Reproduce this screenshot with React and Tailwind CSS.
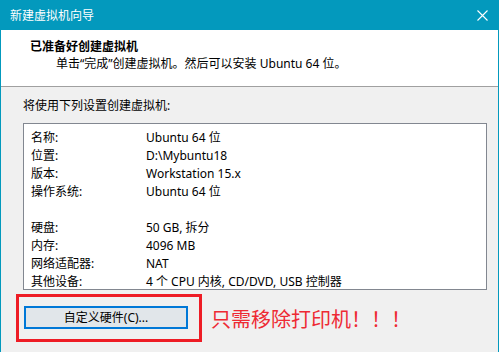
import React from "react";

const rows = [
  ["名称:", "Ubuntu 64 位"],
  ["位置:", "D:\\Mybuntu18"],
  ["版本:", "Workstation 15.x"],
  ["操作系统:", "Ubuntu 64 位"],
  ["", ""],
  ["硬盘:", "50 GB, 拆分"],
  ["内存:", "4096 MB"],
  ["网络适配器:", "NAT"],
  ["其他设备:", "4 个 CPU 内核, CD/DVD, USB 控制器"],
];

export default function App() {
  return (
    <div
      className="w-[499px] h-[352px] overflow-hidden bg-[#f0f0f0] border-l border-r border-[#0399bd] text-[12px] text-black flex flex-col"
      style={{ fontFamily: '"Noto Sans", "Noto Sans CJK SC", sans-serif' }}
    >
      <div className="h-[30px] shrink-0 bg-[#0399bd] flex items-center justify-between pl-[9px] pr-[9px] text-white">
        <span className="leading-[18px] mt-[1px]">新建虚拟机向导</span>
        <svg width="11" height="11" viewBox="0 0 11 11" className="mr-[1px]">
          <path d="M0.5 0.5 L10.5 10.5 M10.5 0.5 L0.5 10.5" stroke="white" strokeWidth="1.1" fill="none" />
        </svg>
      </div>
      <div className="h-[57px] shrink-0 bg-white border-b border-[#a0a0a0] pt-[8px]">
        <div className="pl-[29px] font-bold leading-[18px]">已准备好创建虚拟机</div>
        <div className="pl-[55px] leading-[18px] mt-[-1px]">单击“完成”创建虚拟机。然后可以安装 Ubuntu 64 位。</div>
      </div>
      <div className="px-[22px] pt-[10px] flex flex-col">
        <div className="leading-[18px]">将使用下列设置创建虚拟机:</div>
        <div className="mt-[8px] w-[464px] h-[167px] overflow-hidden bg-white border border-[#828790] pt-[5px] pl-[7px]">
          {rows.map(([k, v], i) => (
            <div key={i} className="flex h-[18px] items-center leading-[18px]">
              <span className="w-[115px] shrink-0">{k}</span>
              <span>{v}</span>
            </div>
          ))}
        </div>
        <div className="ml-[-7px] mt-[4px] flex items-center">
          <div className="w-[186px] h-[48px] border-[3px] border-[#ee1c25] pl-[5px] pt-[9px]">
            <div className="w-[164px] h-[23px] bg-[#e1e6ea] border-2 border-[#0078d7] flex items-center justify-center leading-[16px]">
              自定义硬件(C)...
            </div>
          </div>
          <div className="ml-[9px] text-[20px] leading-[24px] text-[#ee2a33] mt-[3px]">只需移除打印机！！！</div>
        </div>
      </div>
    </div>
  );
}
